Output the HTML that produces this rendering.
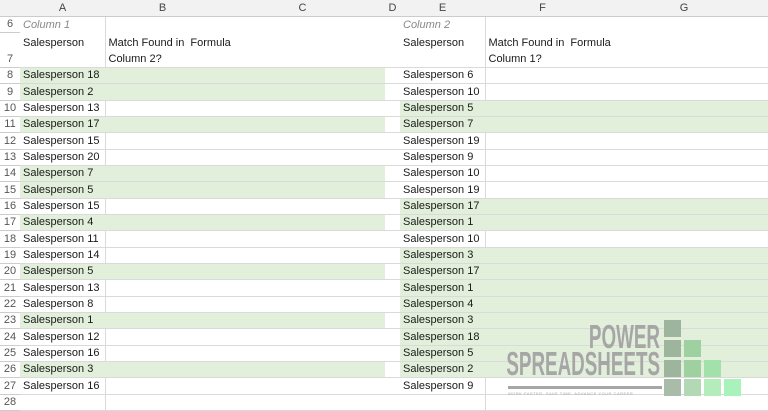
<!DOCTYPE html>
<html><head><meta charset="utf-8"><style>
body{margin:0;width:768px;height:410px;overflow:hidden;background:#fff;font-family:"Liberation Sans",sans-serif;font-size:11px;color:#1a1a1a;position:relative}
table{border-collapse:collapse;table-layout:fixed;width:768px;position:absolute;left:0;top:0}
td{padding:0 0 0 3px;border-bottom:1px solid #dadada;white-space:nowrap;overflow:hidden;height:15.35px;line-height:15px;vertical-align:bottom}
tr.h td{background:#f2f2f2;text-align:center;color:#444;height:16px;border-bottom:1px solid #ccc;padding:0;vertical-align:middle}
td.n{color:#555;padding:0;text-align:center;background:#fff;border-bottom:1px solid #ccc}
td.vl{border-right:1px solid #dadada}
.g{background:#e2efda}
.i{color:#888;font-style:italic}
tr.r7 td{height:31px;vertical-align:top;padding-top:2px;line-height:16px}
.lg{position:absolute;width:300px;text-align:right;font-weight:bold;font-size:33px;color:#a6a6a6;line-height:33px;transform-origin:right top;white-space:nowrap}
</style></head><body>
<table>
<colgroup><col style="width:20px"><col style="width:85px"><col style="width:115px"><col style="width:165px"><col style="width:15px"><col style="width:85px"><col style="width:115px"><col style="width:168px"></colgroup>
<tr class="h"><td></td><td>A</td><td>B</td><td>C</td><td>D</td><td>E</td><td>F</td><td>G</td></tr>
<tr><td class="n">6</td><td class="i vl" style="border-bottom:none">Column 1</td><td style="border-bottom:none"></td><td style="border-bottom:none"></td><td style="border-bottom:none"></td><td class="i vl" style="border-bottom:none">Column 2</td><td style="border-bottom:none"></td><td style="border-bottom:none"></td></tr>
<tr class="r7"><td class="n" style="vertical-align:bottom;padding:0">7</td><td class="vl">Salesperson</td><td colspan="2">Match Found in&nbsp; Formula<br>Column 2?</td><td></td><td class="vl">Salesperson</td><td colspan="2">Match Found in&nbsp; Formula<br>Column 1?</td></tr>
<tr><td class="n">8</td><td class="g">Salesperson 18</td><td class="g"></td><td class="g"></td><td></td><td class="vl">Salesperson 6</td><td></td><td></td></tr>
<tr><td class="n">9</td><td class="g">Salesperson 2</td><td class="g"></td><td class="g"></td><td></td><td class="vl">Salesperson 10</td><td></td><td></td></tr>
<tr><td class="n">10</td><td class="vl">Salesperson 13</td><td></td><td></td><td></td><td class="g">Salesperson 5</td><td class="g"></td><td class="g"></td></tr>
<tr><td class="n">11</td><td class="g">Salesperson 17</td><td class="g"></td><td class="g"></td><td></td><td class="g">Salesperson 7</td><td class="g"></td><td class="g"></td></tr>
<tr><td class="n">12</td><td class="vl">Salesperson 15</td><td></td><td></td><td></td><td class="vl">Salesperson 19</td><td></td><td></td></tr>
<tr><td class="n">13</td><td class="vl">Salesperson 20</td><td></td><td></td><td></td><td class="vl">Salesperson 9</td><td></td><td></td></tr>
<tr><td class="n">14</td><td class="g">Salesperson 7</td><td class="g"></td><td class="g"></td><td></td><td class="vl">Salesperson 10</td><td></td><td></td></tr>
<tr><td class="n">15</td><td class="g">Salesperson 5</td><td class="g"></td><td class="g"></td><td></td><td class="vl">Salesperson 19</td><td></td><td></td></tr>
<tr><td class="n">16</td><td class="vl">Salesperson 15</td><td></td><td></td><td></td><td class="g">Salesperson 17</td><td class="g"></td><td class="g"></td></tr>
<tr><td class="n">17</td><td class="g">Salesperson 4</td><td class="g"></td><td class="g"></td><td></td><td class="g">Salesperson 1</td><td class="g"></td><td class="g"></td></tr>
<tr><td class="n">18</td><td class="vl">Salesperson 11</td><td></td><td></td><td></td><td class="vl">Salesperson 10</td><td></td><td></td></tr>
<tr><td class="n">19</td><td class="vl">Salesperson 14</td><td></td><td></td><td></td><td class="g">Salesperson 3</td><td class="g"></td><td class="g"></td></tr>
<tr><td class="n">20</td><td class="g">Salesperson 5</td><td class="g"></td><td class="g"></td><td></td><td class="g">Salesperson 17</td><td class="g"></td><td class="g"></td></tr>
<tr><td class="n">21</td><td class="vl">Salesperson 13</td><td></td><td></td><td></td><td class="g">Salesperson 1</td><td class="g"></td><td class="g"></td></tr>
<tr><td class="n">22</td><td class="vl">Salesperson 8</td><td></td><td></td><td></td><td class="g">Salesperson 4</td><td class="g"></td><td class="g"></td></tr>
<tr><td class="n">23</td><td class="g">Salesperson 1</td><td class="g"></td><td class="g"></td><td></td><td class="g">Salesperson 3</td><td class="g"></td><td class="g"></td></tr>
<tr><td class="n">24</td><td class="vl">Salesperson 12</td><td></td><td></td><td></td><td class="g">Salesperson 18</td><td class="g"></td><td class="g"></td></tr>
<tr><td class="n">25</td><td class="vl">Salesperson 16</td><td></td><td></td><td></td><td class="g">Salesperson 5</td><td class="g"></td><td class="g"></td></tr>
<tr><td class="n">26</td><td class="g">Salesperson 3</td><td class="g"></td><td class="g"></td><td></td><td class="g">Salesperson 2</td><td class="g"></td><td class="g"></td></tr>
<tr><td class="n">27</td><td class="vl">Salesperson 16</td><td></td><td></td><td></td><td class="vl">Salesperson 9</td><td></td><td></td></tr>
<tr><td class="n">28</td><td class="vl"></td><td></td><td></td><td></td><td class="vl"></td><td></td><td></td></tr>
</table>
<div class="lg" style="left:360px;top:320px;transform:scaleX(0.57)">POWER</div>
<div class="lg" style="left:360px;top:347px;transform:scaleX(0.57)">SPREADSHEETS</div>
<div style="position:absolute;left:508px;top:386px;width:154px;height:3px;background:#a6a6a6"></div>
<div style="position:absolute;left:508px;top:391px;width:154px;font-size:4px;color:#aaa;letter-spacing:0.5px;white-space:nowrap">WORK FASTER. SAVE TIME. ADVANCE YOUR CAREER</div>
<div style="position:absolute;left:664px;top:320px;width:17px;height:17px;background:#9db59d"></div>
<div style="position:absolute;left:664px;top:340px;width:17px;height:17px;background:#9db59d"></div>
<div style="position:absolute;left:664px;top:360px;width:17px;height:17px;background:#9db59d"></div>
<div style="position:absolute;left:664px;top:379px;width:17px;height:17px;background:#a9bca9"></div>
<div style="position:absolute;left:684px;top:340px;width:17px;height:17px;background:#9fd0a0"></div>
<div style="position:absolute;left:684px;top:360px;width:17px;height:17px;background:#9fd0a0"></div>
<div style="position:absolute;left:684px;top:379px;width:17px;height:17px;background:#b2d8b4"></div>
<div style="position:absolute;left:704px;top:360px;width:17px;height:17px;background:#a2e2aa"></div>
<div style="position:absolute;left:704px;top:379px;width:17px;height:17px;background:#b4ecbc"></div>
<div style="position:absolute;left:724px;top:379px;width:17px;height:17px;background:#aaf2bc"></div>
</body></html>
